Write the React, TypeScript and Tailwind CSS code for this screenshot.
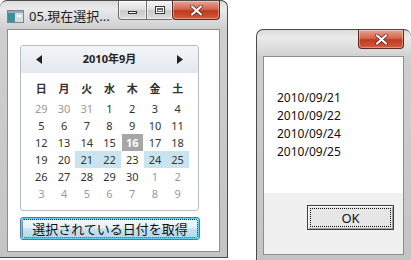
import React from "react";

const font = "font-['Noto_Sans','Noto_Sans_CJK_JP',sans-serif]";

const frameBg =
  "bg-[linear-gradient(180deg,#dcdcdc_0px,#eaeaea_8px,#cfcfcf_28px,#c4c4c4_100%)]";

const weeks: { d: number; other?: boolean }[][] = [
  [{ d: 29, other: true }, { d: 30, other: true }, { d: 31, other: true }, { d: 1 }, { d: 2 }, { d: 3 }, { d: 4 }],
  [{ d: 5 }, { d: 6 }, { d: 7 }, { d: 8 }, { d: 9 }, { d: 10 }, { d: 11 }],
  [{ d: 12 }, { d: 13 }, { d: 14 }, { d: 15 }, { d: 16 }, { d: 17 }, { d: 18 }],
  [{ d: 19 }, { d: 20 }, { d: 21 }, { d: 22 }, { d: 23 }, { d: 24 }, { d: 25 }],
  [{ d: 26 }, { d: 27 }, { d: 28 }, { d: 29 }, { d: 30 }, { d: 1, other: true }, { d: 2, other: true }],
  [{ d: 3, other: true }, { d: 4, other: true }, { d: 5, other: true }, { d: 6, other: true }, { d: 7, other: true }, { d: 8, other: true }, { d: 9, other: true }],
];

const selected = [21, 22, 24, 25];

function CloseButton({ width }: { width: string }) {
  return (
    <div
      className={`${width} h-[19px] flex items-center justify-center rounded-b-[4px] border border-t-0 border-[#5a2a22] bg-[linear-gradient(180deg,#e8a394_0%,#d4664f_45%,#c1391f_55%,#d35b3c_100%)] shadow-[inset_0_0_0_1px_rgba(255,255,255,0.35)]`}
    >
      <svg width="13" height="11" viewBox="0 0 13 11">
        <path d="M2 1.5 L11 9.5 M11 1.5 L2 9.5" stroke="#5b2118" strokeWidth="3.6" strokeLinecap="round" />
        <path d="M2 1.5 L11 9.5 M11 1.5 L2 9.5" stroke="#ffffff" strokeWidth="2.2" strokeLinecap="round" />
      </svg>
    </div>
  );
}

function GlassButton({ width, children, first }: { width: string; children: React.ReactNode; first?: boolean }) {
  return (
    <div
      className={`${width} h-[19px] flex items-center justify-center border border-t-0 border-r-0 border-[#6e6e6e] ${first ? "rounded-bl-[4px]" : ""} bg-[linear-gradient(180deg,#f4f4f4_0%,#e2e2e2_45%,#c9c9c9_55%,#dedede_100%)] shadow-[inset_0_0_0_1px_rgba(255,255,255,0.6)]`}
    >
      {children}
    </div>
  );
}

function LeftWindow() {
  return (
    <div className={`relative w-[228px] h-[258px] rounded-t-[7px] border border-l-0 border-[#4a4a4a] ${frameBg} flex flex-col`}>
      {/* title bar */}
      <div className="h-[28px] flex items-start shrink-0">
        <div className="flex items-center gap-[5px] pl-[7px] pt-[7px]">
          <svg width="17" height="13" viewBox="0 0 17 13">
            <rect x="0.5" y="0.5" width="16" height="12" fill="#d8dde4" stroke="#7a8592" />
            <rect x="1" y="3" width="7" height="9" fill="#3f8f9a" />
            <rect x="1" y="1" width="15" height="2" fill="#9aa7b5" />
            <rect x="10" y="5" width="4" height="2" fill="#ffffff" />
          </svg>
          <span className={`${font} text-[13px] leading-[16px] text-[#1e1e1e]`}>05.現在選択...</span>
        </div>
        <div className="ml-auto mr-[7px] flex">
          <GlassButton width="w-[28px]" first>
            <div className="w-[9px] h-[3px] mt-[5px] bg-white border border-[#333]" />
          </GlassButton>
          <GlassButton width="w-[26px]">
            <div className="w-[10px] h-[8px] border border-[#333] bg-white flex items-center justify-center">
              <div className="w-[6px] h-[4px] border border-[#666] border-t-2" />
            </div>
          </GlassButton>
          <CloseButton width="w-[48px]" />
        </div>
      </div>

      {/* client area */}
      <div className="ml-[7px] mr-[7px] mb-[5px] flex-1 bg-white border border-[#8e8e8e] pl-[12px] pt-[15px]">
        <div className="w-[179px] h-[166px] border border-[#b4bcc6] rounded-[3px] bg-white">
          <div className="h-[27px] flex items-center justify-between px-[15px] bg-[linear-gradient(180deg,#f3f5f8_0%,#e3e8ef_100%)] rounded-t-[2px]">
            <svg width="6" height="9" viewBox="0 0 6 9">
              <path d="M6 0 L0 4.5 L6 9 Z" fill="#222" />
            </svg>
            <span className={`${font} text-[11px] font-bold text-[#222]`}>2010年9月</span>
            <svg width="6" height="9" viewBox="0 0 6 9">
              <path d="M0 0 L6 4.5 L0 9 Z" fill="#222" />
            </svg>
          </div>
          <div className="w-[159px] ml-[9px] mt-[7px]">
            <div className="grid grid-cols-7 h-[17px] items-center">
              {["日", "月", "火", "水", "木", "金", "土"].map((n) => (
                <span key={n} className={`${font} text-[11px] font-bold text-[#333] text-center leading-[17px]`}>
                  {n}
                </span>
              ))}
            </div>
            <div className="mt-[3px]">
              {weeks.map((w, wi) => (
                <div key={wi} className="grid grid-cols-7 h-[17px]">
                  {w.map((c, ci) => {
                    const isToday = !c.other && c.d === 16;
                    const isSel = !c.other && wi === 3 && selected.includes(c.d);
                    return (
                      <div key={ci} className={`flex items-center justify-center ${isSel ? "bg-[#c9e4ef]" : ""}`}>
                        {isToday ? (
                          <span className={`${font} w-[21px] h-[17px] bg-[#a6a6a6] text-white font-bold text-[11px] leading-[17px] text-center`}>
                            {c.d}
                          </span>
                        ) : (
                          <span className={`${font} text-[11px] leading-[17px] ${c.other ? "text-[#9a9a9a]" : "text-[#333]"}`}>
                            {c.d}
                          </span>
                        )}
                      </div>
                    );
                  })}
                </div>
              ))}
            </div>
          </div>
        </div>

        <div className="mt-[6px] w-[180px] h-[23px] rounded-[3px] border border-[#3c7fb1] p-[1px] shadow-[inset_0_0_0_1px_#5ed0f4]">
          <div className="h-full rounded-[2px] border border-dotted border-[#222] bg-[linear-gradient(180deg,#f2f8fc_0%,#e2f0f8_48%,#c6e2f2_52%,#b6d9ee_100%)] flex items-center justify-center">
            <span className={`${font} text-[13px] leading-[16px] text-[#111]`}>選択されている日付を取得</span>
          </div>
        </div>
      </div>
    </div>
  );
}

function RightWindow() {
  return (
    <div className={`w-[155px] h-[231px] mt-[29px] ml-[28px] rounded-t-[7px] border border-r-0 border-b-0 border-[#4a4a4a] ${frameBg} flex flex-col`}>
      <div className="h-[26px] flex justify-end pr-[7px] shrink-0">
        <CloseButton width="w-[46px]" />
      </div>
      <div className="ml-[6px] mr-[7px] mb-[5px] flex-1 bg-white border border-[#8e8e8e] flex flex-col">
        <div className={`${font} pl-[13px] pt-[32px] text-[12px] leading-[18px] text-[#111] flex-1`}>
          <div>2010/09/21</div>
          <div>2010/09/22</div>
          <div>2010/09/24</div>
          <div>2010/09/25</div>
        </div>
        <div className="h-[61px] bg-[#f0f0f0] flex justify-end pr-[9px] pt-[12px]">
          <div className="w-[87px] h-[25px] border border-[#3d3d3d] bg-[#e6e6e6] p-[2px] shadow-[inset_1px_1px_0_#ffffff,inset_-1px_-1px_0_#a0a0a0]">
            <div className="h-full border border-dotted border-[#111] flex items-center justify-center">
              <span className={`${font} text-[13px] leading-[16px] text-[#111]`}>OK</span>
            </div>
          </div>
        </div>
      </div>
    </div>
  );
}

export default function App() {
  return (
    <div className="w-[411px] h-[260px] bg-white flex items-start overflow-hidden">
      <LeftWindow />
      <RightWindow />
    </div>
  );
}
